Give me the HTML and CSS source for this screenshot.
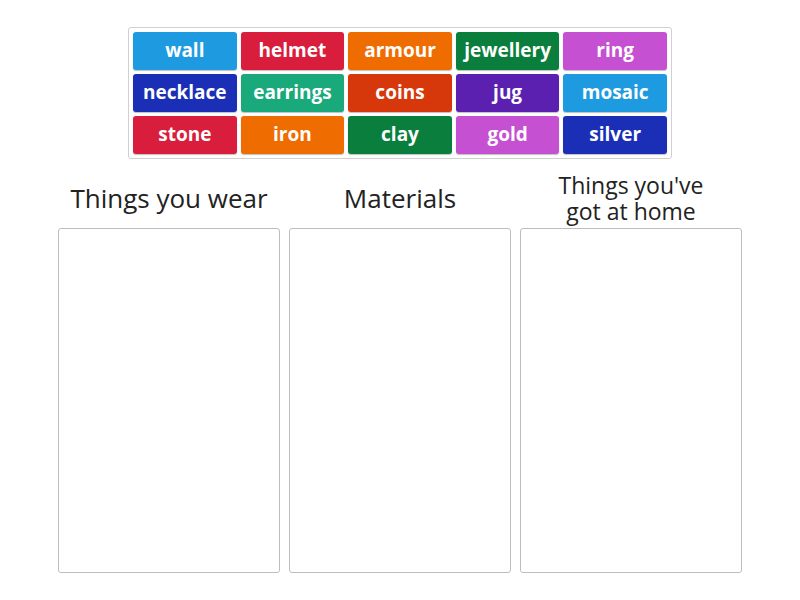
FILE: index.html
```html
<!DOCTYPE html>
<html>
<head>
<meta charset="utf-8">
<link rel="stylesheet" href="styles.css">
</head>
<body>
<div class="page">
  <div class="bank">
    <div class="tile c-blue">wall</div>
    <div class="tile c-red">helmet</div>
    <div class="tile c-orange">armour</div>
    <div class="tile c-green">jewellery</div>
    <div class="tile c-pink">ring</div>
    <div class="tile c-navy">necklace</div>
    <div class="tile c-teal">earrings</div>
    <div class="tile c-rust">coins</div>
    <div class="tile c-purple">jug</div>
    <div class="tile c-blue">mosaic</div>
    <div class="tile c-red">stone</div>
    <div class="tile c-orange">iron</div>
    <div class="tile c-green">clay</div>
    <div class="tile c-pink">gold</div>
    <div class="tile c-navy">silver</div>
  </div>
  <div class="groups">
    <div class="group">
      <div class="group-title">Things you wear</div>
      <div class="drop"></div>
    </div>
    <div class="group">
      <div class="group-title">Materials</div>
      <div class="drop"></div>
    </div>
    <div class="group">
      <div class="group-title group-title-small">Things you've<br>got at home</div>
      <div class="drop"></div>
    </div>
  </div>
</div>
</body>
</html>
```

FILE: styles.css
```css
html, body {
  margin: 0;
  padding: 0;
  background: #fff;
}
body {
  font-family: "Open Sans", "Noto Sans", sans-serif;
}
.page {
  width: 800px;
  height: 600px;
  display: flex;
  flex-direction: column;
  align-items: center;
  padding-top: 27px;
  box-sizing: border-box;
}
.bank {
  width: 544px;
  box-sizing: border-box;
  border: 1px solid #d0d0d0;
  border-radius: 3px;
  padding: 4px;
  display: grid;
  grid-template-columns: repeat(5, 1fr);
  grid-auto-rows: 38px;
  gap: 4px 4px;
}
.tile {
  color: #fff;
  font-weight: 700;
  font-size: 19px;
  display: flex;
  align-items: center;
  justify-content: center;
  border-radius: 3px;
  padding-bottom: 3px;
  box-sizing: border-box;
  box-shadow: 0 1px 1px rgba(0,0,0,0.25);
}
.c-blue { background: #1e9be0; }
.c-red { background: #d81e3c; }
.c-orange { background: #ef6d00; }
.c-green { background: #0a7e3c; }
.c-pink { background: #c650d2; }
.c-navy { background: #1a2fb6; }
.c-teal { background: #19a97b; }
.c-rust { background: #d6380c; }
.c-purple { background: #5b20b0; }
.groups {
  margin-top: 9px;
  display: flex;
  gap: 9px;
}
.group {
  width: 222px;
  display: flex;
  flex-direction: column;
}
.group-title {
  height: 60px;
  display: flex;
  align-items: center;
  justify-content: center;
  text-align: center;
  font-size: 26px;
  line-height: 30px;
  color: #222;
}
.group-title-small {
  font-size: 23px;
  line-height: 26px;
}
.drop {
  height: 345px;
  border: 1px solid #bdbdbd;
  border-radius: 3px;
  box-sizing: border-box;
}
```
